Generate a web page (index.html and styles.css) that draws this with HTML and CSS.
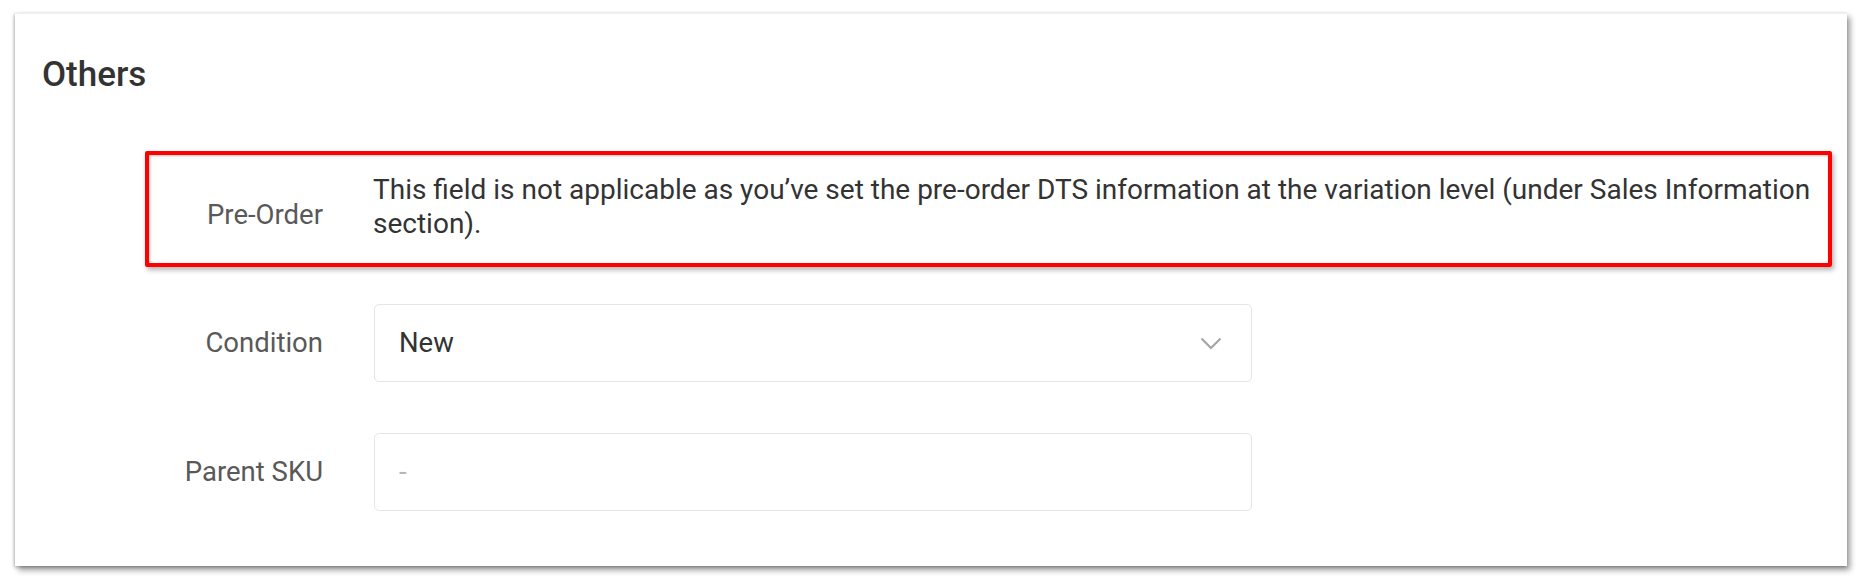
FILE: index.html
```html
<!DOCTYPE html>
<html lang="en">
<head>
  <meta charset="UTF-8">
  <meta name="viewport" content="width=device-width, initial-scale=1.0">
  <title>Others</title>
  <link rel="stylesheet" href="styles.css">
</head>
<body>
  <section class="card">
    <h2 class="card-title">Others</h2>

    <div class="form-row form-row-note">
      <label class="form-label">Pre-Order</label>
      <p class="form-note">This field is not applicable as you’ve set the pre-order DTS information at the variation level (under Sales Information section).</p>
    </div>

    <div class="form-row">
      <label class="form-label">Condition</label>
      <div class="select">
        <span class="select-value">New</span>
        <svg class="select-arrow" width="22" height="13" viewBox="0 0 22 13">
          <path d="M1.5 1.5 L11 11 L20.5 1.5" fill="none" stroke="#a3a3a3" stroke-width="2"/>
        </svg>
      </div>
    </div>

    <div class="form-row">
      <label class="form-label">Parent SKU</label>
      <div class="input">
        <span class="input-placeholder">-</span>
      </div>
    </div>
  </section>
</body>
</html>
```

FILE: styles.css
```css
* {
  padding: 0;
  margin: 0;
  box-sizing: border-box;
}
html,
body {
  height: 577px;
  overflow: hidden;
}
body {
  background-color: #fff;
  font-family: Roboto, "Liberation Sans", sans-serif;
  padding: 13px 0 0 15px;
}
.card {
  width: 1832px;
  height: 553px;
  background-color: #fff;
  padding: 41px 21px 0 27px;
  border-top: 1px solid #f0f0f0;
  box-shadow: 3px 4px 6px rgba(0, 0, 0, .4), -1px 1px 3px rgba(0, 0, 0, .25);
}
.card-title {
  font-size: 35px;
  font-weight: 500;
  line-height: 40px;
  color: #333;
}
.form-row {
  display: grid;
  grid-template-columns: 281px 878px;
  column-gap: 51px;
  align-items: center;
  margin-top: 51px;
  font-size: 27.5px;
  line-height: 34px;
}
.form-row-note {
  position: relative;
  grid-template-columns: 281px 1fr;
  column-gap: 50px;
  align-items: start;
  margin-top: 78px;
}
.form-row-note + .form-row {
  margin-top: 63px;
}
/* red annotation frame drawn over the pre-order row */
.form-row-note::after {
  content: "";
  position: absolute;
  top: -22px;
  bottom: -26px;
  left: 103px;
  right: -6px;
  border: 4px solid #f00;
  border-radius: 2px;
  box-shadow: 2px 3px 5px rgba(0, 0, 0, .3), inset 1px 1px 3px rgba(0, 0, 0, .25);
  pointer-events: none;
}
.form-label {
  text-align: right;
  color: #595959;
}
.form-row-note .form-label {
  margin-top: 25px;
}
.form-note {
  font-size: 28px;
  color: #333;
  padding-right: 6px;
}
.select,
.input {
  height: 78px;
  border: 1px solid #e5e5e5;
  border-radius: 5px;
  padding: 0 29px 0 24px;
  display: flex;
  align-items: center;
  justify-content: space-between;
}
.select-value {
  color: #333;
}
.input-placeholder {
  color: #b7b7b7;
}
```
